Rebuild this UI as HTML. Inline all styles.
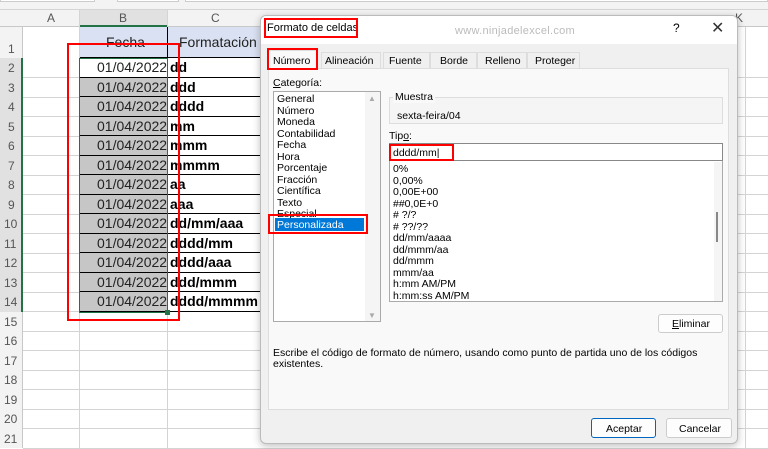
<!DOCTYPE html>
<html><head><meta charset="utf-8"><style>
*{margin:0;padding:0;box-sizing:border-box}
body{width:768px;height:448px;overflow:hidden;background:#fff;font-family:"Liberation Sans",sans-serif;position:relative}
.a{position:absolute}
.t{position:absolute;white-space:nowrap}
.d{font-size:10.5px;color:#000}
</style></head><body>
<!-- top strip -->
<div class="a" style="left:0;top:0;width:768px;height:10px;background:#f3f3f3;border-bottom:1px solid #d4d4d4"></div>
<div class="a" style="left:0;top:0;width:95px;height:2px;border:1px solid #ccc;border-top:none;background:#fff"></div>
<div class="a" style="left:117px;top:0;width:62px;height:2px;border:1px solid #ccc;border-top:none;background:#fff"></div>
<div class="a" style="left:185px;top:0;width:583px;height:2px;border:1px solid #ccc;border-top:none;background:#fff"></div>
<!-- column header -->
<div class="a" style="left:0;top:10px;width:768px;height:17px;background:#f3f3f3;border-bottom:1px solid #c8c8c8"></div>
<div class="a" style="left:80px;top:10px;width:87px;height:17px;background:#e1e1e1;border-bottom:2px solid #217346"></div>
<div class="t" style="left:47px;top:11px;font-size:12px;color:#555">A</div>
<div class="t" style="left:119px;top:11px;font-size:12px;color:#555">B</div>
<div class="t" style="left:211px;top:11px;font-size:12px;color:#555">C</div>
<div class="t" style="left:735px;top:11px;font-size:12px;color:#555">K</div>
<!-- row header -->
<div class="a" style="left:0;top:27px;width:23px;height:421px;background:#f3f3f3;border-right:1px solid #c8c8c8"></div>
<div class="a" style="left:0;top:58px;width:23px;height:254px;background:#e1e1e1;border-right:2px solid #217346"></div>
<!-- column lines -->
<div class="a" style="left:79px;top:10px;width:1px;height:438px;background:#d4d4d4"></div>
<div class="a" style="left:167px;top:10px;width:1px;height:438px;background:#d4d4d4"></div>
<div class="a" style="left:745px;top:27px;width:1px;height:421px;background:#d4d4d4"></div>
<!-- header row 1 -->
<div class="a" style="left:80px;top:27px;width:180px;height:31px;background:#d9e1f2;border-bottom:1px solid #000"></div>
<div class="a" style="left:167px;top:27px;width:1px;height:31px;background:#000"></div>
<div class="t" style="left:106px;top:34px;font-size:14px;color:#222">Fecha</div>
<div class="t" style="left:179px;top:34px;font-size:14px;color:#222">Formatación</div>
<div class="t" style="left:8px;top:42px;font-size:12px;color:#555">1</div>
<div id="rows"></div>
<script>
var fm=["dd","ddd","dddd","mm","mmm","mmmm","aa","aaa","dd/mm/aaa","dddd/mm","dddd/aaa","ddd/mmm","dddd/mmmm"];
var h="";
for(var i=0;i<20;i++){var y=58+i*19.5,n=i+2;
h+='<div class="a" style="left:23px;top:'+(y+19)+'px;width:745px;height:1px;background:#d4d4d4"></div>';
h+='<div class="t" style="left:'+(n<10?8:4)+'px;top:'+(y+3)+'px;font-size:12px;color:#555">'+n+'</div>';
if(i<13){
h+='<div class="a" style="left:80px;top:'+y+'px;width:87px;height:19.5px;background:'+(i==0?'#fff':'#c6c6c6')+';border-bottom:1px solid #000"></div>';
h+='<div class="a" style="left:167px;top:'+y+'px;width:93px;height:19.5px;background:#fff;border-bottom:1px solid #000;border-left:1px solid #000"></div>';
h+='<div class="t" style="left:97px;top:'+(y+1)+'px;font-size:14px;color:#222">01/04/2022</div>';
h+='<div class="t" style="left:170px;top:'+(y+1)+'px;font-size:14px;font-weight:bold;color:#000">'+fm[i]+'</div>';}
}
document.getElementById("rows").innerHTML=h;
</script>
<div class="a" style="left:79px;top:58px;width:89px;height:255px;border:1.5px solid #217346"></div>
<div class="a" style="left:165px;top:310px;width:5px;height:5px;background:#217346"></div>
<div class="a" style="left:67px;top:43px;width:113px;height:278px;border:2px solid #f00"></div>
<!-- dialog -->
<div class="a" style="left:260px;top:15px;width:478px;height:429px;background:#f0f0f0;border:1px solid #bbb;border-radius:6px;box-shadow:0 2px 8px rgba(0,0,0,.25);overflow:hidden">
<div class="a" style="left:0;top:0;width:478px;height:28px;background:#fff"></div>
</div>
<div class="t d" style="left:267px;top:22px;font-size:11px">Formato de celdas</div>
<div class="a" style="left:264px;top:18px;width:94px;height:20px;border:2px solid #f00"></div>
<div class="t" style="left:455px;top:25px;font-size:11px;color:#bbb;letter-spacing:.3px">www.ninjadelexcel.com</div>
<div class="t" style="left:673px;top:21px;font-size:12px">?</div>
<div class="t" style="left:711px;top:18px;font-size:16px;color:#333">✕</div>
<!-- tabs -->
<div class="a" style="left:268px;top:68px;width:461px;height:342px;background:#f9f9f9;border:1px solid #ddd"></div>
<div class="a" style="left:268px;top:50px;width:50px;height:20px;background:#f9f9f9;border:1px solid #ddd;border-bottom:none"></div>
<div class="a" style="left:321px;top:52px;width:60px;height:17px;background:#f0f0f0;border:1px solid #ddd"></div>
<div class="a" style="left:383px;top:52px;width:47px;height:17px;background:#f0f0f0;border:1px solid #ddd"></div>
<div class="a" style="left:430px;top:52px;width:47px;height:17px;background:#f0f0f0;border:1px solid #ddd"></div>
<div class="a" style="left:477px;top:52px;width:50px;height:17px;background:#f0f0f0;border:1px solid #ddd"></div>
<div class="a" style="left:527px;top:52px;width:53px;height:17px;background:#f0f0f0;border:1px solid #ddd"></div>
<div class="t d" style="left:273px;top:55px">Número</div>
<div class="t d" style="left:325px;top:55px">Alineación</div>
<div class="t d" style="left:389px;top:55px">Fuente</div>
<div class="t d" style="left:440px;top:55px">Borde</div>
<div class="t d" style="left:485px;top:55px">Relleno</div>
<div class="t d" style="left:535px;top:55px">Proteger</div>
<div class="a" style="left:267px;top:48px;width:51px;height:22px;border:2px solid #f00"></div>
<!-- categoria -->
<div class="t d" style="left:273px;top:77px"><u>C</u>ategoría:</div>
<div class="a" style="left:273px;top:91px;width:108px;height:231px;background:#fff;border:1px solid #aaa"></div>
<div class="a" style="left:365px;top:92px;width:15px;height:229px;background:#f5f5f5"></div>
<div class="t" style="left:368px;top:94px;font-size:8px;color:#aaa">▲</div>
<div class="t" style="left:368px;top:311px;font-size:8px;color:#aaa">▼</div>
<div id="cat"></div>
<div class="a" style="left:275px;top:218px;width:89px;height:13px;background:#0078d7"></div>
<div class="t" style="left:277px;top:219px;font-size:10.5px;color:#fff">Personalizada</div>
<div class="a" style="left:268px;top:214px;width:100px;height:20px;border:2px solid #f00"></div>
<!-- muestra -->
<div class="a" style="left:389px;top:97px;width:334px;height:27px;border:1px solid #ddd;background:#f5f5f5"></div>
<div class="t d" style="left:393px;top:91px;background:#f9f9f9;padding:0 2px">Muestra</div>
<div class="t d" style="left:397px;top:110px">sexta-feira/04</div>
<div class="t d" style="left:389px;top:130px">Tip<u>o</u>:</div>
<div class="a" style="left:389px;top:143px;width:334px;height:18px;background:#fff;border:1px solid #888"></div>
<div class="t d" style="left:393px;top:147px">dddd/mm|</div>
<div class="a" style="left:389px;top:144px;width:65px;height:17px;border:2px solid #f00"></div>
<div class="a" style="left:389px;top:161px;width:334px;height:141px;background:#fff;border:1px solid #aaa;border-top:none"></div>
<div class="a" style="left:714px;top:162px;width:8px;height:139px;background:#f5f5f5"></div>
<div class="a" style="left:716px;top:212px;width:2px;height:30px;background:#888"></div>
<div id="tipo"></div>
<div class="a" style="left:658px;top:314px;width:65px;height:19px;background:#fdfdfd;border:1px solid #ccc;border-radius:3px"></div>
<div class="t d" style="left:672px;top:318px"><u>E</u>liminar</div>
<div class="t d" style="left:273px;top:347px">Escribe el código de formato de número, usando como punto de partida uno de los códigos</div>
<div class="t d" style="left:273px;top:358px">existentes.</div>
<div class="a" style="left:591px;top:418px;width:65px;height:20px;background:#fdfdfd;border:1px solid #0067c0;border-radius:3px"></div>
<div class="t d" style="left:606px;top:423px">Aceptar</div>
<div class="a" style="left:666px;top:418px;width:66px;height:20px;background:#fdfdfd;border:1px solid #ccc;border-radius:3px"></div>
<div class="t d" style="left:679px;top:423px">Cancelar</div>
<script>
var c=["General","Número","Moneda","Contabilidad","Fecha","Hora","Porcentaje","Fracción","Científica","Texto","Especial"],s="";
for(var i=0;i<c.length;i++)s+='<div class="t d" style="left:277px;top:'+(93+i*11.5)+'px">'+c[i]+'</div>';
document.getElementById("cat").innerHTML=s;
var t=["0%","0,00%","0,00E+00","##0,0E+0","# ?/?","# ??/??","dd/mm/aaaa","dd/mmm/aa","dd/mmm","mmm/aa","h:mm AM/PM","h:mm:ss AM/PM"];s="";
for(var i=0;i<t.length;i++)s+='<div class="t d" style="left:393px;top:'+(163+i*11.5)+'px">'+t[i]+'</div>';
document.getElementById("tipo").innerHTML=s;
</script>
</body></html>
